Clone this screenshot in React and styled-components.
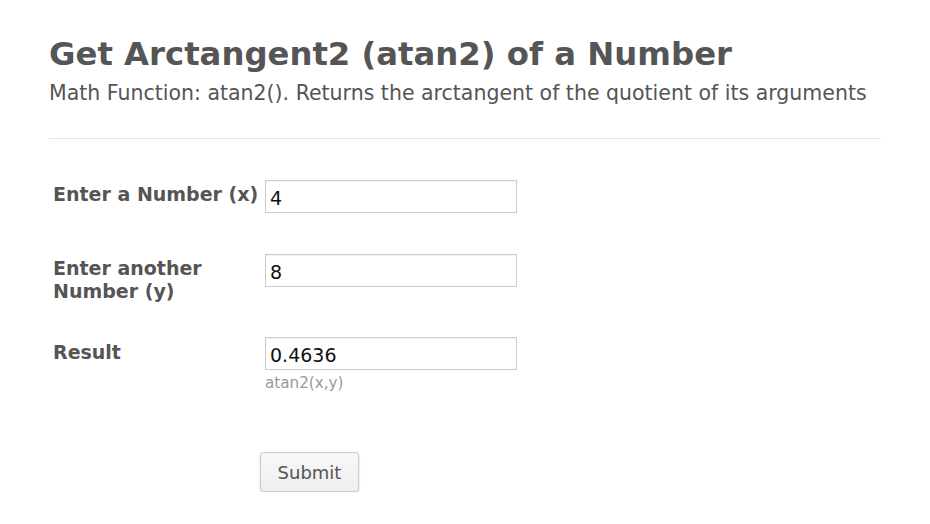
import React from "react";
import styled, { createGlobalStyle } from "styled-components";

const Global = createGlobalStyle`
  html, body { margin: 0; padding: 0; background: #fff; }
  body { font-family: "DejaVu Sans", Verdana, sans-serif; color: #555; }
`;

const Page = styled.div`
  padding: 34px 49px 0 49px;
  width: 832px;
`;

const Title = styled.h1`
  margin: 0;
  font-size: 32.3px;
  font-weight: bold;
  color: #555;
  line-height: 40px;
`;

const Subtitle = styled.p`
  margin: 5px 0 0 0;
  font-size: 20.5px;
  line-height: 28px;
  color: #555;
`;

const Divider = styled.hr`
  border: 0;
  border-top: 1px solid #e3e3e3;
  margin: 31px 0 0 0;
`;

const Form = styled.form`
  display: flex;
  flex-direction: column;
  padding: 41px 0 0 4px;
`;

const Row = styled.div`
  display: grid;
  grid-template-columns: 212px 252px;
  align-items: start;
  margin-bottom: ${(p) => p.$gap}px;
`;

const Label = styled.label`
  font-weight: bold;
  font-size: 19px;
  line-height: 23px;
  color: #555;
  padding-top: ${(p) => p.$pt || 4}px;
`;

const Field = styled.div`
  display: flex;
  flex-direction: column;
`;

const Input = styled.input`
  box-sizing: border-box;
  width: 252px;
  height: 33px;
  border: 1px solid #ccc;
  box-shadow: inset 0 1px 1px rgba(0,0,0,0.05);
  font-family: "DejaVu Sans", Verdana, sans-serif;
  font-size: 19px;
  color: #111;
  padding: 3px 5px 0 4px;
  margin: 0;
  outline: none;
`;

const Hint = styled.span`
  font-size: 15.2px;
  color: #999;
  margin-top: 4px;
`;

const Actions = styled.div`
  padding-left: 207px;
`;

const Button = styled.button`
  width: 99px;
  height: 40px;
  border: 1px solid #ccc;
  border-radius: 3px;
  background: linear-gradient(#f8f8f8, #eeeeee);
  box-shadow: 0 1px 2px rgba(0,0,0,0.2);
  font-family: "DejaVu Sans", Verdana, sans-serif;
  font-size: 18px;
  color: #555;
  cursor: pointer;
`;

export default function App() {
  return (
    <>
      <Global />
      <Page>
        <Title>Get Arctangent2 (atan2) of a Number</Title>
        <Subtitle>Math Function: atan2(). Returns the arctangent of the quotient of its arguments</Subtitle>
        <Divider />
        <Form onSubmit={(e) => e.preventDefault()}>
          <Row $gap={41}>
            <Label $pt={3}>Enter a Number (x)</Label>
            <Field><Input defaultValue="4" /></Field>
          </Row>
          <Row $gap={34}>
            <Label $pt={3}>Enter another Number (y)</Label>
            <Field><Input defaultValue="8" /></Field>
          </Row>
          <Row $gap={60}>
            <Label $pt={4}>Result</Label>
            <Field>
              <Input defaultValue="0.4636" />
              <Hint>atan2(x,y)</Hint>
            </Field>
          </Row>
          <Actions>
            <Button type="submit">Submit</Button>
          </Actions>
        </Form>
      </Page>
    </>
  );
}
